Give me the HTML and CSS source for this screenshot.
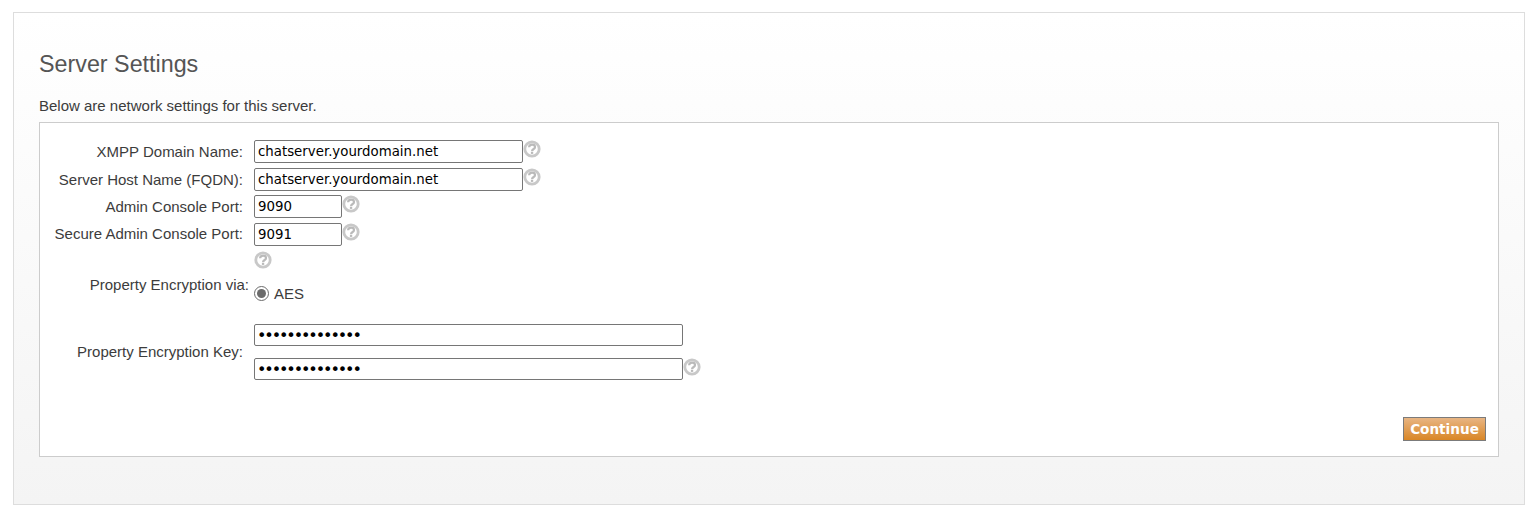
FILE: index.html
```html
<!DOCTYPE html>
<html lang="en">
<head>
<meta charset="utf-8">
<title>Server Settings</title>
<link rel="stylesheet" href="styles.css">
</head>
<body>
<svg class="defs" width="0" height="0" aria-hidden="true">
  <symbol id="help" viewBox="0 0 18 18">
    <circle cx="9" cy="9" r="7.2" fill="#fff" stroke="#c8c8c8" stroke-width="2.8"/>
    <path d="M6.1 7.3C6.2 5.5 7.4 4.6 9 4.6c1.8 0 3 1 3 2.3 0 1.3-.9 1.8-1.6 2.3-.7.5-1.3.9-1.3 1.7" fill="none" stroke="#bababa" stroke-width="2.2"/>
    <rect x="7.9" y="11.7" width="2.3" height="2.2" fill="#bababa"/>
  </symbol>
</svg>
<main class="panel">
  <h1 class="title">Server Settings</h1>
  <p class="intro">Below are network settings for this server.</p>
  <form class="box">
    <div class="row row-a">
      <label class="label">XMPP Domain Name:</label>
      <input class="field wide" type="text" value="chatserver.yourdomain.net">
      <svg class="help"><use href="#help"/></svg>
    </div>
    <div class="row row-a">
      <label class="label">Server Host Name (FQDN):</label>
      <input class="field wide" type="text" value="chatserver.yourdomain.net">
      <svg class="help"><use href="#help"/></svg>
    </div>
    <div class="row row-a">
      <label class="label">Admin Console Port:</label>
      <input class="field port" type="text" value="9090">
      <svg class="help"><use href="#help"/></svg>
    </div>
    <div class="row row-a">
      <label class="label label-tight">Secure Admin Console Port:</label>
      <input class="field port" type="text" value="9091">
      <svg class="help"><use href="#help"/></svg>
    </div>
    <div class="row row-icon">
      <span class="label"></span>
      <svg class="help"><use href="#help"/></svg>
    </div>
    <div class="row row-enc">
      <span class="label label-enc">Property Encryption via:</span>
      <label class="radio"><input class="radio-input" type="radio" name="enc" checked> <span class="radio-text">AES</span></label>
    </div>
    <div class="row row-key">
      <label class="label">Property Encryption Key:</label>
      <div class="keys">
        <input class="field key" type="password" value="aaaaaaaaaaaaaa">
        <div class="key-line">
          <input class="field key" type="password" value="aaaaaaaaaaaaaa">
          <svg class="help"><use href="#help"/></svg>
        </div>
      </div>
    </div>
    <div class="actions">
      <button class="continue" type="button">Continue</button>
    </div>
  </form>
</main>
</body>
</html>
```
FILE: styles.css
```css
html, body {
  margin: 0;
  padding: 0;
  background: #fff;
}
body {
  padding: 12px 11px 15px 13px;
  font-family: "Liberation Sans", Arial, sans-serif;
  font-size: 15px;
  color: #3c3c3c;
}
.defs {
  position: absolute;
}
.panel {
  box-sizing: border-box;
  height: 493px;
  padding: 0 25px;
  border: 1px solid #ddd;
  background: linear-gradient(#fff, #f4f4f4);
}
.title {
  margin: 0;
  padding-top: 37px;
  font-size: 23.3px;
  line-height: 28px;
  font-weight: 400;
  color: #555;
}
.intro {
  margin: 0;
  padding-top: 19px;
  line-height: 17px;
  height: 17px;
}
.box {
  box-sizing: border-box;
  height: 335px;
  margin-top: 8px;
  padding: 17px 12px 0 0;
  border: 1px solid #ccc;
  background: #fff;
  display: flex;
  flex-direction: column;
}
.row {
  display: flex;
  align-items: flex-start;
}
.row-a {
  height: 27.5px;
}
.label {
  box-sizing: border-box;
  width: 203px;
  flex: none;
  text-align: right;
  line-height: 23px;
}
.label-tight {
  line-height: 22px;
}
.field {
  box-sizing: border-box;
  height: 23px;
  margin: 0 0 0 11px;
  padding: 1px 3px;
  border: 1px solid #767676;
  border-radius: 2px;
  background: #fff;
  color: #000;
  font-family: "DejaVu Sans", Verdana, sans-serif;
  font-size: 13.33px;
}
.wide {
  width: 269px;
}
.port {
  width: 88px;
}
.key {
  width: 429px;
  height: 22px;
  padding: 1px 3px 0 2px;
  font-size: 16px;
  letter-spacing: -2.1px;
}
.help {
  width: 18px;
  height: 18px;
  flex: none;
  margin-top: 0;
}
.row-icon {
  height: 24px;
  padding-left: 11px;
}
.row-icon .help {
  margin-top: 1px;
}
.row-enc {
  height: 48px;
}
.label-enc {
  width: 209px;
  line-height: 22px;
}
.row-key .label {
  line-height: 22px;
}
.radio {
  display: flex;
  align-items: center;
  margin: 9px 0 0 5px;
  line-height: 20px;
  gap: 5px;
}
.radio-text {
  padding-top: 1px;
}
.radio-input {
  width: 15px;
  height: 15px;
  margin: 0;
  accent-color: #6b6b6b;
}
.row-key {
  height: 60px;
  align-items: center;
}
.keys {
  display: flex;
  flex-direction: column;
  gap: 12px;
}
.key-line {
  display: flex;
}
.actions {
  display: flex;
  justify-content: flex-end;
  margin-top: auto;
  padding-bottom: 15px;
}
.continue {
  box-sizing: border-box;
  width: 83px;
  height: 24px;
  padding: 0;
  border: 1px solid #7b7b7b;
  background: linear-gradient(#e8b583, #d98626);
  color: #fff;
  font-family: "DejaVu Sans", Verdana, sans-serif;
  font-size: 13.6px;
  font-weight: 700;
}
```
